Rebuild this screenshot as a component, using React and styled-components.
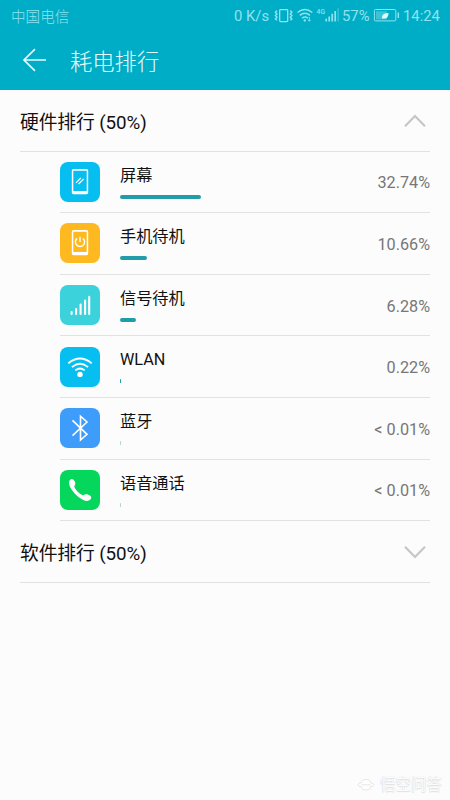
import styled, { createGlobalStyle } from 'styled-components';

const GlobalStyle = createGlobalStyle`
  * {
    box-sizing: border-box;
  }
  body {
    margin: 0;
    background: #fcfcfc;
    font-family: Roboto, 'Noto Sans CJK SC', sans-serif;
  }
`;

const Page = styled.div`
  position: relative;
  width: 450px;
  height: 800px;
  overflow: hidden;
  background: #fcfcfc;
`;

const Header = styled.header`
  height: 90px;
  background: #00adc6;
`;

const StatusBar = styled.div`
  height: 30px;
  padding: 1px 9px 0 11px;
  display: flex;
  align-items: center;
  justify-content: space-between;
  color: #8fe3ef;
`;

const Carrier = styled.span`
  font-size: 14.6px;
  font-weight: 300;
`;

const StatusIcons = styled.div`
  display: flex;
  align-items: center;
  font-size: 14.8px;
  line-height: 30px;

  svg {
    display: block;
  }
`;

const StatusText = styled.span`
  width: ${(props) => props.$width}px;
  padding-top: 1px;
  white-space: nowrap;
`;

const TitleBar = styled.div`
  height: 60px;
  padding-left: 22px;
  display: flex;
  align-items: center;

  h1 {
    margin: 3px 0 0 23px;
    color: #e6fbfd;
    font-size: 22.3px;
    font-weight: 300;
    line-height: 60px;
  }
`;

const List = styled.main`
  padding: 0 20px;
`;

const SectionHead = styled.div`
  height: 61.6px;
  padding: 2px 4px 0 0;
  border-bottom: 1px solid #e2e2e2;
  display: flex;
  align-items: center;
  justify-content: space-between;

  h2 {
    margin: 3px 0 0;
    color: #111;
    font-size: 18.8px;
    font-weight: 400;
    line-height: 30px;
    letter-spacing: -0.1px;
  }
`;

const Rows = styled.ul`
  margin: 0;
  padding: 0 0 0 40px;
  list-style: none;
`;

const Row = styled.li`
  height: 61.6px;
  border-bottom: 1px solid #e2e2e2;
  display: flex;
  align-items: center;
`;

const IconTile = styled.div`
  width: 40px;
  height: 40px;
  border-radius: 8px;
  background: ${(props) => props.$color};

  svg {
    display: block;
  }
`;

const Info = styled.div`
  flex: 1;
  height: 100%;
  padding: 12px 0 0 20px;
`;

const Name = styled.div`
  height: 24px;
  color: #111;
  font-size: 16.2px;
  line-height: 24px;
`;

const Bar = styled.div`
  height: 4px;
  margin-top: 7px;
  border-radius: 2px;
  background: ${(props) => (props.$faint ? '#b5d3d6' : '#229ca9')};
`;

const Percent = styled.span`
  padding-top: 2px;
  color: #777;
  font-size: 16.2px;
`;

const Watermark = styled.div`
  position: absolute;
  right: 8px;
  bottom: 4px;
  display: flex;
  align-items: center;
  gap: 5px;
  color: #fcfcfc;
  font-size: 15.5px;
  line-height: 22px;
  text-shadow: 0 0 1px #ccc, 0 1px 1px #e2e2e2;
`;

const BackArrow = () => (
  <svg width="25" height="24" viewBox="0 0 25 24" fill="none" stroke="#e6fbfd" strokeWidth="1.7">
    <path d="M13 1.2 2 12l11 10.8M2 12h22" />
  </svg>
);

const Chevron = ({ up }) => (
  <svg width="22" height="14" viewBox="0 0 22 14" fill="none" stroke="#c6c6c6" strokeWidth="2.2">
    <path d={up ? 'M1 12.2 11 2l10 10.2' : 'M1 1.8 11 12 21 1.8'} />
  </svg>
);

const SystemIcons = () => (
  <svg width="69" height="22" viewBox="273 5 69 22" fill="none" stroke="currentColor">
    <rect x="279.7" y="9.6" width="8" height="12" rx="0.8" strokeWidth="1.3" />
    <path d="M277 10.5l-1.6 1.7 1.6 1.7-1.6 1.7 1.6 1.7-1.6 1.7 1.6 1.3M290.3 10.5l1.6 1.7-1.6 1.7 1.6 1.7-1.6 1.7 1.6 1.7-1.6 1.3" strokeWidth="1.4" />
    <path d="M297.5 12.5q7.3-6 14.8 0M299.8 15.4q5-4.1 10.2 0M302.2 18.1q2.8-2.2 5.6 0" strokeWidth="1.5" />
    <circle cx="304.8" cy="20.4" r="1.2" fill="currentColor" stroke="none" />
    <path d="M309.3 17v4m-1.2-1.2 1.2 1.5 1.2-1.5" strokeWidth="0.9" />
    <text x="316.6" y="14" fill="currentColor" stroke="none" fontSize="7.4" fontWeight="500" textLength="8.4" lengthAdjust="spacingAndGlyphs">4G</text>
    <path d="M326.2 18.8v2.7M329.2 16.5v5M332.2 13.7v7.8M335.2 11v10.5" strokeWidth="1.7" />
    <path d="M338.2 8.3v13.2" strokeWidth="1.7" opacity="0.35" />
  </svg>
);

const BatteryIcon = () => (
  <svg width="31" height="22" viewBox="371 5 31 22" fill="none" stroke="currentColor">
    <rect x="373.4" y="9.5" width="21.400" height="11.400" rx="1" />
    <path d="M375 11.2h10.8v8.200H375z" fill="currentColor" stroke="none" opacity="0.4" />
    <path d="M397.3 12.500v5.500" strokeWidth="1.5" />
    <path d="M381.2 18.6c-.8-4.4 2.3-5.7 6.4-5.7-.2 4-1.9 6.4-5.2 5.4l-1 1z" fill="#dcfaff" stroke="none" />
  </svg>
);

const Phone = ({ children }) => (
  <>
    <path d="M13.6 7h12.8a1.800 1.800 0 0 1 1.800 1.800v21.600a1.800 1.800 0 0 1-1.800 1.800H13.600a1.800 1.800 0 0 1-1.800-1.800V8.800A1.800 1.800 0 0 1 13.600 7zm-.3 1.700v20.300h13.400V8.700z" fill="#fff" fillRule="evenodd" />
    {children}
  </>
);

const glyphs = {
  screen: (
    <Phone>
      <path d="M16 20.800l4.800-4.800M18.600 22l5.200-5.200" stroke="#fff" strokeWidth="1.2" />
    </Phone>
  ),
  standby: (
    <Phone>
      <path d="M17 15.4a4.600 4.600 0 1 0 6 0M20 13.800v5.200" fill="none" stroke="#fff" strokeWidth="1.4" />
    </Phone>
  ),
  signal: (
    <path d="M11.6 27.1v1.8M16.1 24.1v4.8M20.6 19.6v9.3M25.1 15.6v13.3M29.2 11.8v17.1" stroke="#fff" strokeWidth="2.1" strokeLinecap="round" />
  ),
  wlan: (
    <>
      <path d="M8.3 16.4q11.7-9.7 23.4 0M11.9 20.1q8.1-6.6 16.2 0M15.3 23.4q4.7-3.8 9.4 0" fill="none" stroke="#fff" strokeWidth="1.8" />
      <circle cx="20" cy="27.4" r="2.7" fill="#fff" />
    </>
  ),
  bluetooth: (
    <path d="M12.5 12.4 27 26.3 20.5 32V8.2L27 14 12.5 27.7" fill="none" stroke="#fff" strokeWidth="1.6" />
  ),
  call: (
    <path d="M9.5 10.6c.9-1.7 2.8-2.2 4-.9 1.6 1.7 2.3 3.6 1.6 5-.5 1-1.2 1.5-.5 2.8 1.5 3 4.3 5.7 7.5 7.4 1.2.6 1.8.1 2.6-.4 1.4-.8 4-.1 5.6 1.2 1.5 1.2 1.2 3.1-.5 4.4-2.3 1.7-6.4.8-11-2.8C13.4 23.1 7.2 15.5 9.5 10.6z" fill="#fff" />
  ),
};

const hardware = [
  { name: '屏幕', icon: 'screen', color: '#06bff0', percent: '32.74%', bar: 81 },
  { name: '手机待机', icon: 'standby', color: '#fdb91f', percent: '10.66%', bar: 26.5 },
  { name: '信号待机', icon: 'signal', color: '#3bd2dc', percent: '6.28%', bar: 16 },
  { name: 'WLAN', icon: 'wlan', color: '#06bff0', percent: '0.22%', bar: 1 },
  { name: '蓝牙', icon: 'bluetooth', color: '#3e9cfa', percent: '< 0.01%', bar: 1, faint: true },
  { name: '语音通话', icon: 'call', color: '#04d75b', percent: '< 0.01%', bar: 1, faint: true },
];

function App() {
  return (
    <>
      <GlobalStyle />
      <Page>
        <Header>
          <StatusBar>
            <Carrier>中国电信</Carrier>
            <StatusIcons>
              <StatusText $width={39}>0 K/s</StatusText>
              <SystemIcons />
              <StatusText $width={30}>57%</StatusText>
              <BatteryIcon />
              <StatusText $width={38}>14:24</StatusText>
            </StatusIcons>
          </StatusBar>
          <TitleBar>
            <BackArrow />
            <h1>耗电排行</h1>
          </TitleBar>
        </Header>
        <List>
          <SectionHead>
            <h2>硬件排行 (50%)</h2>
            <Chevron up />
          </SectionHead>
          <Rows>
            {hardware.map((item) => (
              <Row key={item.name}>
                <IconTile $color={item.color}>
                  <svg width="40" height="40" viewBox="0 0 40 40">{glyphs[item.icon]}</svg>
                </IconTile>
                <Info>
                  <Name>{item.name}</Name>
                  <Bar $faint={item.faint} style={{ width: item.bar }} />
                </Info>
                <Percent>{item.percent}</Percent>
              </Row>
            ))}
          </Rows>
          <SectionHead>
            <h2>软件排行 (50%)</h2>
            <Chevron />
          </SectionHead>
        </List>
        <Watermark>
          <svg width="18" height="14" viewBox="0 0 18 14" fill="#fff" stroke="#dedede" strokeWidth="0.8">
            <path d="M4.500 5a4.500 3.500 0 0 1 9 0c4.500-.5 4.500 4 0 3.500a4.500 3.500 0 0 1-9 0C0 9 0 4.500 4.500 5zM4.500 6.800h9" />
          </svg>
          悟空问答
        </Watermark>
      </Page>
    </>
  );
}

export default App;
